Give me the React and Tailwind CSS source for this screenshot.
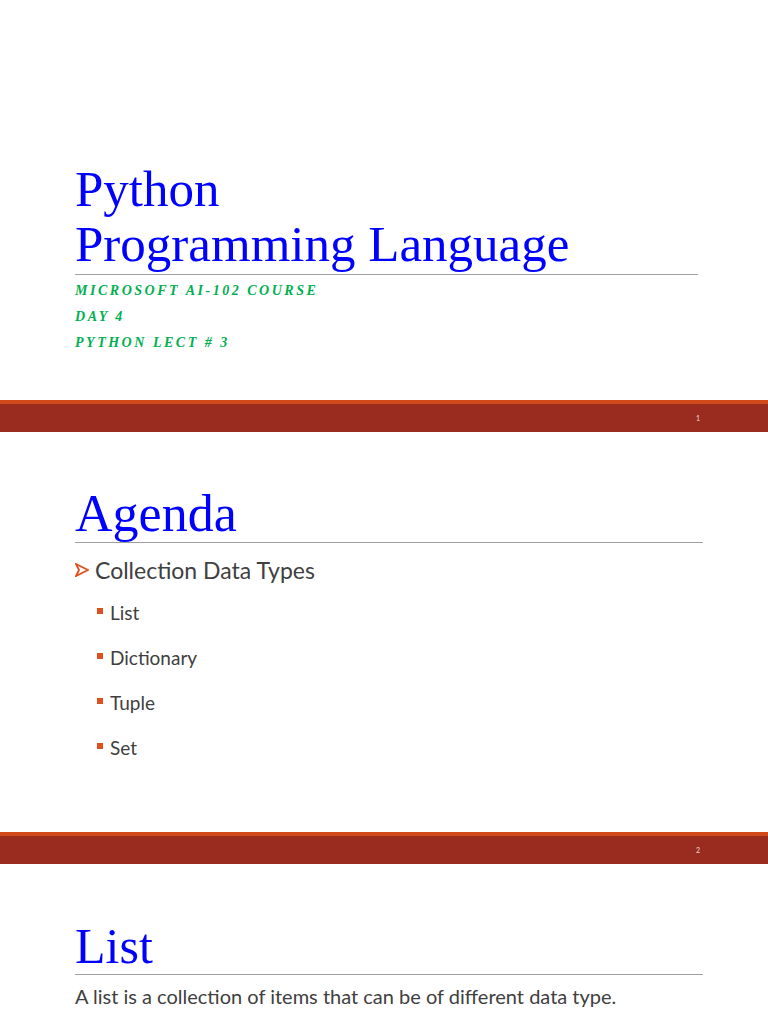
import React from "react";

const serif = { fontFamily: '"Liberation Serif", serif' };
const body = { fontFamily: 'Lato, "Open Sans", sans-serif' };

const Bar = ({ n }) => (
  <div className="h-8 flex flex-col">
    <div className="h-[4px] bg-[#d24a1c]" />
    <div className="flex-1 bg-[#9a2c1f] flex items-center justify-end pr-[68px]">
      <span className="text-[7px] text-white/80" style={body}>{n}</span>
    </div>
  </div>
);

const Sub = ({ children }) => (
  <div className="text-[14px] leading-[26px] font-bold italic tracking-[0.18em] text-[#00b050]" style={serif}>
    {children}
  </div>
);

export default function App() {
  return (
    <div className="w-[768px] h-[1024px] overflow-hidden bg-white">
      {/* slide 1 */}
      <div className="h-[400px] pl-[75px] pr-[70px] pt-[162px]">
        <div className="text-[51px] leading-[55px] text-[#0000ff]" style={serif}>
          Python
          <br />
          Programming Language
        </div>
        <div className="h-px bg-[#a0a0a0] mt-[2px] mb-[3px]" />
        <Sub>MICROSOFT AI-102 COURSE</Sub>
        <Sub>DAY 4</Sub>
        <Sub>PYTHON LECT # 3</Sub>
      </div>
      <Bar n="1" />
      {/* slide 2 */}
      <div className="h-[400px] pl-[75px] pr-[65px] pt-[52px]">
        <div className="text-[52px] leading-[60px] text-[#0000ff]" style={serif}>Agenda</div>
        <div className="h-px bg-[#a0a0a0] mt-[-2px]" />
        <div className="flex items-center gap-[6px] mt-[10px] text-[23px] text-[#404040]" style={body}>
          <svg width="14" height="14" viewBox="0 0 14 14">
            <path d="M1 1 L13 7 L1 13 L4 7 Z" fill="none" stroke="#e0501e" strokeWidth="1.8" strokeLinejoin="miter" />
          </svg>
          Collection Data Types
        </div>
        <div className="mt-[13px] ml-[22px] flex flex-col gap-[21px]">
          {["List", "Dictionary", "Tuple", "Set"].map((t) => (
            <div key={t} className="flex items-center gap-[7px] text-[19px] leading-[24px] text-[#404040]" style={body}>
              <span className="w-[6px] h-[6px] bg-[#e0501e] -mt-[4px]" />
              {t}
            </div>
          ))}
        </div>
      </div>
      <Bar n="2" />
      {/* slide 3 */}
      <div className="pl-[75px] pr-[65px] pt-[53px]">
        <div className="text-[50px] leading-[58px] text-[#0000ff]" style={serif}>List</div>
        <div className="h-px bg-[#a0a0a0] mt-[-1px]" />
        <div className="mt-[8px] text-[20px] leading-[26px] text-[#404040]" style={body}>
          A list is a collection of items that can be of different data type.
        </div>
      </div>
    </div>
  );
}
